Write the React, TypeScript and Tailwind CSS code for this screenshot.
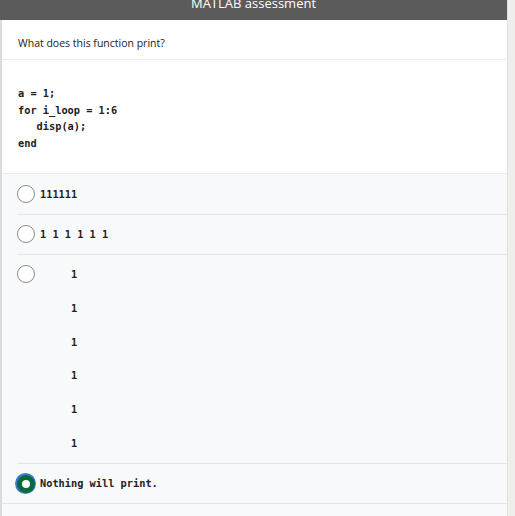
import React from "react";

const mono = { fontFamily: '"DejaVu Sans Mono", monospace' };

function Radio({ checked }: { checked?: boolean }) {
  if (checked) {
    return (
      <span className="flex h-[21px] w-[21px] shrink-0 items-center justify-center rounded-full bg-[#3b7bd0] -ml-[2px] -mr-[1px]">
        <span className="flex h-[18px] w-[18px] items-center justify-center rounded-full bg-[#0a6b3a]">
          <span className="h-[8px] w-[8px] rounded-full bg-white" />
        </span>
      </span>
    );
  }
  return (
    <span className="h-[18px] w-[18px] shrink-0 rounded-full border border-[#8a8a8a] bg-white" />
  );
}

function Option({
  children,
  className,
}: {
  children: React.ReactNode;
  className: string;
}) {
  return (
    <div className={"flex items-start gap-[5px] border-b border-[#e4e5e9] " + className}>
      <Radio />
      <div className="pt-[1px]">{children}</div>
    </div>
  );
}

export default function App() {
  const codeCls =
    "whitespace-pre text-[10.3px] font-bold leading-[16.5px] text-[#222]";

  return (
    <div
      className="flex h-[516px] w-[515px] overflow-hidden bg-[#f8f9fb]"
      style={{ fontFamily: '"Open Sans", "Noto Sans", sans-serif' }}
    >
      <div className="flex min-w-0 flex-1 flex-col">
        <div className="h-[20px] shrink-0 overflow-hidden bg-[#5b5b5b] text-center">
          <div className="-mt-[7px] text-[13px] leading-[20px] text-white">
            MATLAB assessment
          </div>
        </div>
        <div className="flex flex-1 flex-col border-l-2 border-[#dcdcdc]">
          <div className="flex h-[40px] items-center border-b border-[#ececec] bg-white px-[16px] pt-[8px] text-[10.5px] text-[#222]">
            What does this function print?
          </div>
          <div className="h-[114px] border-b border-[#ececec] bg-white px-[16px] pt-[25px]">
            <div className={codeCls} style={mono}>
              {"a = 1;\nfor i_loop = 1:6\n   disp(a);\nend"}
            </div>
          </div>
          <div className="pl-[15px]">
            <Option className="h-[41px] pt-[11px]">
              <div className={codeCls} style={mono}>
                111111
              </div>
            </Option>
            <Option className="h-[40px] pt-[10px]">
              <div className={codeCls} style={mono}>
                1 1 1 1 1 1
              </div>
            </Option>
            <Option className="h-[209px] pt-[10px]">
              <div className="flex flex-col gap-[17.3px]">
                {[0, 1, 2, 3, 4, 5].map((i) => (
                  <div key={i} className={codeCls} style={mono}>
                    {"     1"}
                  </div>
                ))}
              </div>
            </Option>
          </div>
          <div className="border-b border-[#e4e5e9]">
            <div className="pl-[15px]">
              <div className="flex h-[39px] items-start gap-[5px] pt-[9px]">
                <Radio checked />
                <div className="pt-[2px]">
                  <div className={codeCls} style={mono}>
                    Nothing will print.
                  </div>
                </div>
              </div>
            </div>
          </div>
        </div>
      </div>
      <div className="w-[8px] shrink-0 border-l border-[#e2e1dd] bg-[#efeeea]" />
    </div>
  );
}
